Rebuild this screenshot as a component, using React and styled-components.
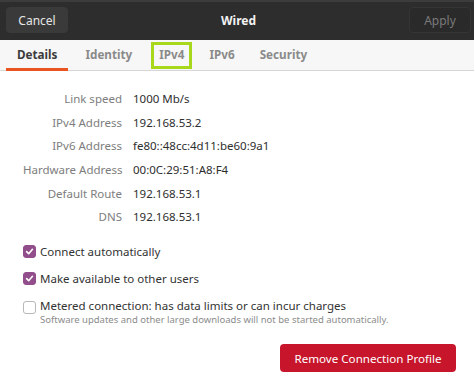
import React from 'react';
import styled, { createGlobalStyle } from 'styled-components';

const GlobalStyle = createGlobalStyle`
  html, body {
    margin: 0;
    padding: 0;
    background: #ffffff;
  }
  body {
    font-family: "Noto Sans", "DejaVu Sans", sans-serif;
    width: 474px;
    height: 389px;
    overflow: hidden;
  }
`;

const Window = styled.div`
  width: 474px;
  height: 389px;
  display: flex;
  flex-direction: column;
  background: #ffffff;
`;

const HeaderBar = styled.div`
  height: 40px;
  box-sizing: border-box;
  background: #2d2d2d;
  border-top: 2px solid #3c3c3c;
  display: flex;
  align-items: center;
  justify-content: space-between;
  padding: 0 3px 0 6px;
`;

const HeaderButton = styled.button`
  width: 62px;
  height: 26px;
  border-radius: 4px;
  font-family: inherit;
  font-size: 12px;
  border: 1px solid ${p => (p.disabled ? '#353535' : '#3a3a3a')};
  background: ${p => (p.disabled ? '#2a2a2a' : '#3a3a3a')};
  color: ${p => (p.disabled ? '#7a7a7a' : '#e6e6e6')};
  margin-top: -2px;
  padding: 0;
`;

const Title = styled.div`
  color: #f2f2f2;
  font-weight: 700;
  font-size: 12px;
  margin-top: -2px;
`;

const TabBar = styled.div`
  height: 31px;
  box-sizing: border-box;
  background: #f7f7f7;
  border-bottom: 1px solid #d6d6d6;
  display: flex;
  align-items: stretch;
  padding-left: 6px;
`;

const Tab = styled.div`
  position: relative;
  display: flex;
  align-items: center;
  justify-content: center;
  padding: 0 ${p => p.$pr ?? 11}px 0 ${p => p.$pl ?? 11}px;
  font-size: 11.7px;
  font-weight: 700;
  color: ${p => (p.$active ? '#3c3c3c' : '#8a8a8a')};
  border-bottom: 3px solid ${p => (p.$active ? '#e95420' : 'transparent')};
  margin-bottom: -1px;
`;

const Highlight = styled.div`
  position: absolute;
  left: 0;
  right: 0;
  top: 2px;
  bottom: -1px;
  border: 3px solid #a8d81c;
`;

const Body = styled.div`
  flex: 1;
  display: flex;
  flex-direction: column;
  padding: 16px 0 0 23px;
`;

const InfoGrid = styled.div`
  display: grid;
  grid-template-columns: 99px auto;
  column-gap: 11px;
  font-size: 11.5px;
`;

const Label = styled.div`
  text-align: right;
  color: #7d7d7d;
  height: 23.7px;
  line-height: 23.7px;
  white-space: nowrap;
`;

const Value = styled.div`
  color: #2e2e2e;
  height: 23.7px;
  line-height: 23.7px;
  white-space: nowrap;
`;

const Checks = styled.div`
  margin-top: 15px;
  display: flex;
  flex-direction: column;
  gap: 11px;
`;

const CheckRow = styled.div`
  display: flex;
  align-items: flex-start;
  gap: 4px;
`;

const Box = styled.div`
  width: 13px;
  height: 13px;
  box-sizing: border-box;
  border-radius: 3px;
  margin-top: ${p => (p.$checked ? 1 : 3)}px;
  flex-shrink: 0;
  background: ${p => (p.$checked ? '#924d8b' : '#ffffff')};
  border: 1px solid ${p => (p.$checked ? '#924d8b' : '#b8b8b8')};
  display: flex;
  align-items: center;
  justify-content: center;
`;

const CheckText = styled.div`
  display: flex;
  flex-direction: column;
`;

const CheckLabel = styled.div`
  font-size: 11.5px;
  color: #333333;
  line-height: 16px;
`;

const CheckHint = styled.div`
  font-size: 9.5px;
  color: #8c8c8c;
  line-height: 11px;
`;

const Footer = styled.div`
  display: flex;
  justify-content: flex-end;
  padding-right: 18px;
  margin-top: 19px;
`;

const DangerButton = styled.button`
  width: 176px;
  height: 28px;
  border: none;
  border-radius: 4px;
  background: #c7162b;
  color: #ffffff;
  font-family: inherit;
  font-size: 11.6px;
  padding: 0;
`;

const Tick = () => (
  <svg width="9" height="9" viewBox="0 0 10 10">
    <path d="M1.8 5.2 L4.1 7.4 L8.3 2.6" fill="none" stroke="#ffffff" strokeWidth="1.8" strokeLinecap="round" strokeLinejoin="round" />
  </svg>
);

const info = [
  ['Link speed', '1000 Mb/s'],
  ['IPv4 Address', '192.168.53.2'],
  ['IPv6 Address', 'fe80::48cc:4d11:be60:9a1'],
  ['Hardware Address', '00:0C:29:51:A8:F4'],
  ['Default Route', '192.168.53.1'],
  ['DNS', '192.168.53.1'],
];

export default function App() {
  return (
    <Window>
      <GlobalStyle />
      <HeaderBar>
        <HeaderButton>Cancel</HeaderButton>
        <Title>Wired</Title>
        <HeaderButton disabled>Apply</HeaderButton>
      </HeaderBar>
      <TabBar>
        <Tab $active>Details</Tab>
        <Tab $pl={17} $pr={19}>Identity</Tab>
        <Tab $pl={8} $pr={8}>
          IPv4
          <Highlight />
        </Tab>
        <Tab $pl={17} $pr={13}>IPv6</Tab>
        <Tab $pl={12} $pr={12}>Security</Tab>
      </TabBar>
      <Body>
        <InfoGrid>
          {info.map(([k, v]) => (
            <React.Fragment key={k}>
              <Label>{k}</Label>
              <Value>{v}</Value>
            </React.Fragment>
          ))}
        </InfoGrid>
        <Checks>
          <CheckRow>
            <Box $checked><Tick /></Box>
            <CheckLabel>Connect automatically</CheckLabel>
          </CheckRow>
          <CheckRow>
            <Box $checked><Tick /></Box>
            <CheckLabel>Make available to other users</CheckLabel>
          </CheckRow>
          <CheckRow>
            <Box />
            <CheckText>
              <CheckLabel>Metered connection: has data limits or can incur charges</CheckLabel>
              <CheckHint>Software updates and other large downloads will not be started automatically.</CheckHint>
            </CheckText>
          </CheckRow>
        </Checks>
        <Footer>
          <DangerButton>Remove Connection Profile</DangerButton>
        </Footer>
      </Body>
    </Window>
  );
}
